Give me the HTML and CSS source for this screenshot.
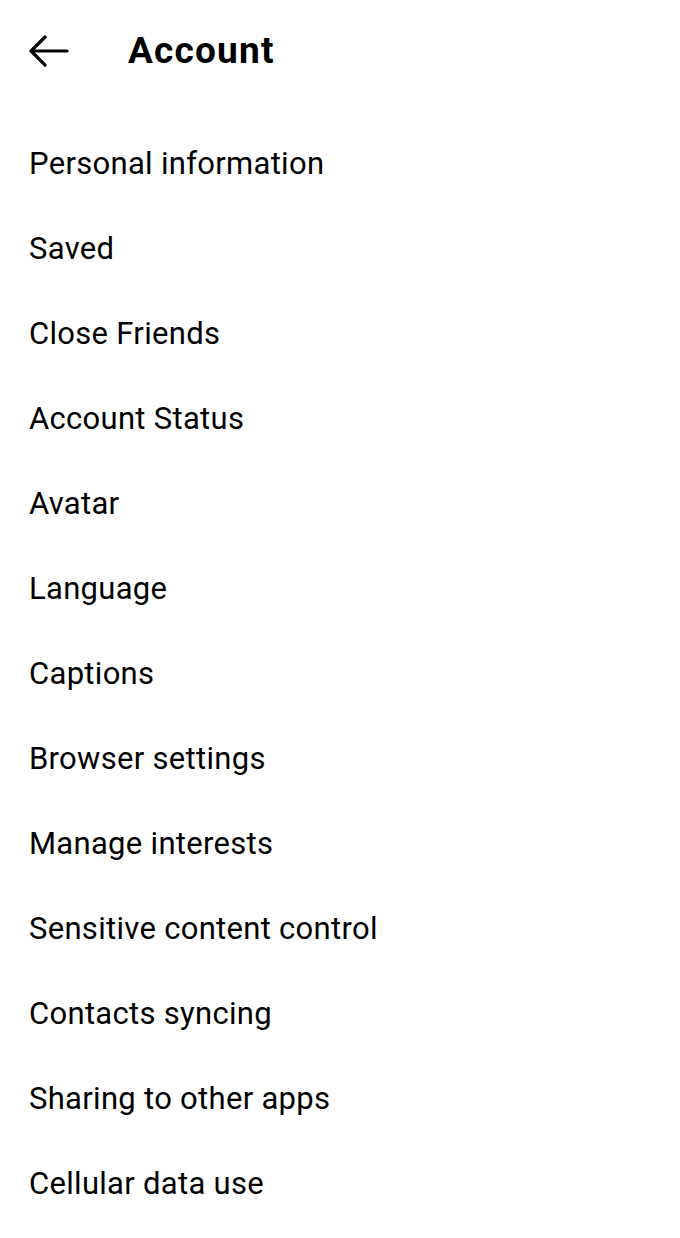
FILE: index.html
```html
<!DOCTYPE html>
<html>
<head>
<meta charset="utf-8">
<link rel="stylesheet" href="styles.css">
</head>
<body>
<header class="header">
  <span class="back" aria-label="Back">
    <svg width="40" height="32" viewBox="0 0 40 32" fill="none" stroke="#000" stroke-width="3.2" stroke-linecap="round" stroke-linejoin="round">
      <path d="M38 16H3"/>
      <path d="M16 2L2 16l14 14"/>
    </svg>
  </span>
  <h1 class="title">Account</h1>
</header>
<ul class="list">
  <li class="item">Personal information</li>
  <li class="item">Saved</li>
  <li class="item">Close Friends</li>
  <li class="item">Account Status</li>
  <li class="item">Avatar</li>
  <li class="item">Language</li>
  <li class="item">Captions</li>
  <li class="item">Browser settings</li>
  <li class="item">Manage interests</li>
  <li class="item">Sensitive content control</li>
  <li class="item">Contacts syncing</li>
  <li class="item">Sharing to other apps</li>
  <li class="item">Cellular data use</li>
</ul>
</body>
</html>
```

FILE: styles.css
```css
html, body {
  margin: 0;
  padding: 0;
  background: #fff;
}
body {
  font-family: Roboto, "Noto Sans", sans-serif;
  color: #000;
  width: 680px;
  height: 1238px;
  overflow: hidden;
}
.header {
  display: flex;
  align-items: center;
  height: 100px;
  padding-left: 29px;
}
.back {
  display: flex;
  width: 41px;
  height: 32px;
  align-items: center;
  margin-top: 2px;
}
.title {
  margin: 0 0 0 58px;
  font-size: 37px;
  font-weight: 700;
  letter-spacing: 1.2px;
  line-height: 1;
}
.list {
  list-style: none;
  margin: 0;
  padding: 21px 0 0 0;
}
.item {
  height: 85px;
  line-height: 85px;
  padding-left: 29px;
  font-size: 31px;
  letter-spacing: 0.3px;
  font-weight: 400;
}
```
